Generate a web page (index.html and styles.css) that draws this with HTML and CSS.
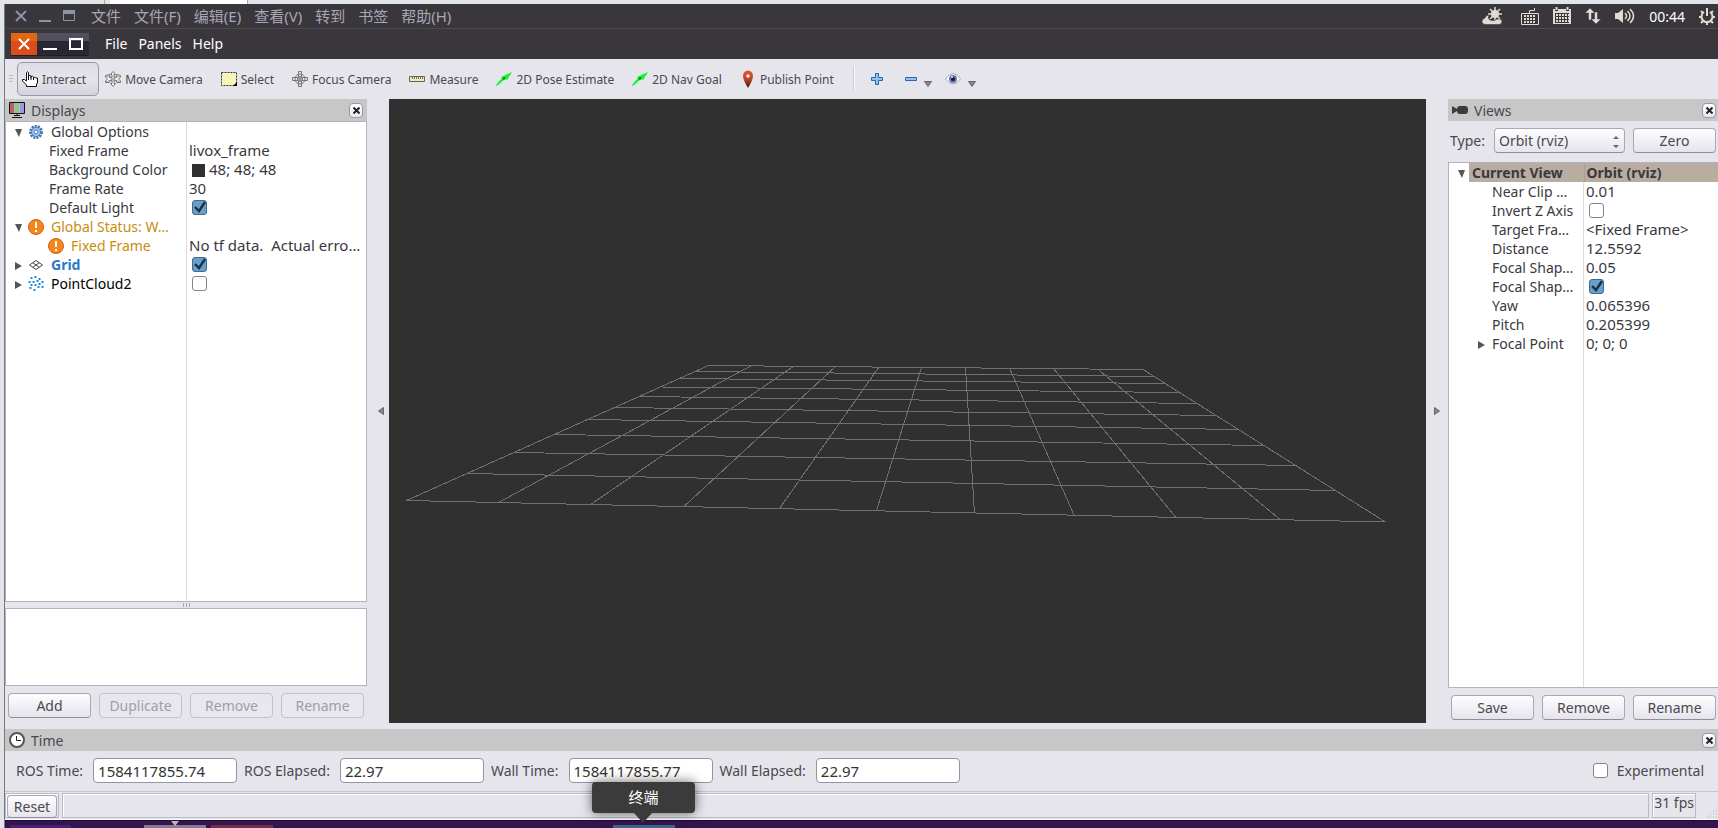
FILE: index.html
```html
<!DOCTYPE html>
<html lang="zh-CN">
<head>
<meta charset="utf-8">
<title>RViz</title>
<link rel="stylesheet" href="styles.css">
</head>
<body>
<div class="host-tabs"><span class="host-tab-edge"></span><span class="host-tab"></span></div>
<div class="desktop">
  <header class="top-panel">
    <div class="panel-window-buttons">
      <button type="button" aria-label="Close window"><svg width="12" height="12" viewBox="0 0 12 12"><path d="M1 1L11 11M11 1L1 11" fill="none" stroke="#8b93a7" stroke-width="2"/></svg></button>
      <button type="button" aria-label="Minimize window"><svg width="12" height="12" viewBox="0 0 12 12"><path d="M0 11H12" stroke="#8b93a7" stroke-width="2"/></svg></button>
      <button type="button" aria-label="Maximize window"><svg width="12" height="12" viewBox="0 0 12 12"><path d="M.5 1V10.500H11.500V1" fill="none" stroke="#8b93a7"/><path d="M0 0H12V4H0z" fill="#8b93a7"/></svg></button>
    </div>
    <nav class="panel-menu">
      <a href="#">文件</a><a href="#">文件(F)</a><a href="#">编辑(E)</a><a href="#">查看(V)</a><a href="#">转到</a><a href="#">书签</a><a href="#">帮助(H)</a>
    </nav>
    <div class="indicators">
      <svg class="weather" width="21" height="18" viewBox="0 0 21 18" fill="#dfdbd2"><circle cx="13" cy="7" r="4"/><path d="M13 0V14M6 7H20M8 2L18 12M18 2L8 12" stroke="#dfdbd2" stroke-width="1.500"/><path d="M3 17.500Q0 17 0 14.500T3 11Q4 8 7 8Q5 13 10 13.500Q13 14 15 12Q19 11 20 14Q20 17.500 17 17.500z" stroke="#39373c" stroke-width=".6"/></svg>
      <svg width="18" height="18" viewBox="0 0 18 18" fill="none" stroke="#dfdbd2"><path d="M.5 6.500H17.500V17.500H.5zM8.500 6V3.500H13.500V1"/><path d="M3 9H15M3 12H15M3 15H15" stroke-width="2" stroke-dasharray="2 1"/></svg>
      <svg width="18" height="18" viewBox="0 0 18 18"><path d="M0 2H2V4H5V2H13V4H16V2H18V17H0z" fill="#dfdbd2"/><path d="M3.500 0V3M14.500 0V3" stroke="#dfdbd2" stroke-width="2"/><path d="M2 6.500H16M2 9.500H16M2 12.500H16M2 15.500H16M2.500 6V16M5.500 6V16M8.500 6V16M11.500 6V16M14.500 6V16" stroke="#39373c"/></svg>
      <svg width="16" height="16" viewBox="0 0 16 16" fill="#dfdbd2"><path d="M5 0L10 5H6.500V12H3.500V5H0zM11 16L6 11H9.500V4H12.500V11H16z" stroke="#39373c" stroke-width=".5"/></svg>
      <svg width="20" height="16" viewBox="0 0 20 16"><path d="M0 5H3L8 1V15L3 11H0z" fill="#dfdbd2"/><path d="M10 5q3 3 0 6M12.500 3q5 5 0 10M15 1q7 7 0 14" fill="none" stroke="#dfdbd2" stroke-width="1.500"/></svg>
      <time>00:44</time>
      <svg width="16" height="17" viewBox="0 0 16 17" fill="none" stroke="#dfdbd2" stroke-width="2"><path d="M5 4A5.500 5.500 0 1 0 11 4M8 0V8"/><path d="M0 9H3M13 9H16M2 3L4 5M14 3L12 5M2 15L4 13M14 15L12 13M8 14V17"/></svg>
    </div>
  </header>

  <div class="menu-bar">
    <div class="window-buttons">
      <button type="button" class="window-close" aria-label="Close"><svg width="14" height="12" viewBox="0 0 14 12"><path d="M2 1L12 11M12 1L2 11" fill="none" stroke="#fff" stroke-width="2"/></svg></button>
      <button type="button" aria-label="Minimize"><svg width="14" height="12" viewBox="0 0 14 12"><path d="M0 11H14" stroke="#fff" stroke-width="2"/></svg></button>
      <button type="button" aria-label="Maximize"><svg width="14" height="12" viewBox="0 0 14 12"><path d="M1 1H13V11H1z" fill="none" stroke="#fff" stroke-width="2"/></svg></button>
    </div>
    <nav class="app-menu"><a href="#">File</a><a href="#">Panels</a><a href="#">Help</a></nav>
  </div>

  <div class="toolbar">
    <span class="toolbar-grip"></span>
    <button type="button" class="tool tool-active"><svg width="16" height="16" viewBox="0 0 16 16"><path d="M4.500 10V1.500Q5.500 0 6.500 1.500V6.500V5Q8 4 9 5V7V5.500Q10.500 4.500 11.500 6V7.500V6.500Q13 5.500 13.500 7H15.500V12L14.500 13V15.500H4.500V14L.5 10V8.500H2.500z" fill="#fff" stroke="#111"/><path d="M6.500 6V9M9 7V9M11.500 7V9" stroke="#111"/></svg><span>Interact</span></button>
    <button type="button" class="tool"><svg width="16" height="16" viewBox="0 0 16 16" fill="#f8f8f8" stroke="#555"><path d="M8 .5L10.500 3.500H9V6.500L12 5.500L11.500 3.500L15.500 4.500V6L13.500 8L15.500 10V11.500H12L11.500 10L9 9V12.500H10.500L8 15.500L5.500 12.500H7V9L4.500 10L4 11.500H.5V10L2.500 8L.5 6V4.500L4.500 3.500L4 5.500L7 6.500V3.500H5.500z" stroke-width=".8"/><path d="M1 5L15 11M15 5L1 11" stroke-width=".5"/></svg><span>Move Camera</span></button>
    <button type="button" class="tool"><svg width="16" height="14" viewBox="0 0 16 14"><path d="M.5 .5H15.500V13.500H.5z" fill="#faf3ba" stroke="#333" stroke-dasharray="2 1"/><path d="M16 10V14H12z"/></svg><span>Select</span></button>
    <button type="button" class="tool"><svg width="16" height="16" viewBox="0 0 16 16" fill="none" stroke="#777"><circle cx="8" cy="8" r="5"/><circle cx="8" cy="8" r="2.500"/><path d="M6.500 .5H9.500V6.500H15.500V9.500H9.500V15.500H6.500V9.500H.5V6.500H6.500zM8 5V11M5 8H11"/></svg><span>Focus Camera</span></button>
    <button type="button" class="tool"><svg width="16" height="16" viewBox="0 0 16 16"><path d="M.5 5.500H15.500V10.500H.5z" fill="#eeeab8" stroke="#66645a"/><path d="M3.500 6V8M5.500 6V8M7.500 6V8M9.500 6V8M11.500 6V8M13.500 6V8" stroke="#77745f"/></svg><span>Measure</span></button>
    <button type="button" class="tool"><svg width="16" height="16" viewBox="0 0 16 16"><path d="M16 1L11 9L9 8L1 15L0 14L6 7L5 6z" fill="#0df52b"/><path d="M7 8l2-1" stroke="#087d19" stroke-width="2"/></svg><span>2D Pose Estimate</span></button>
    <button type="button" class="tool"><svg width="16" height="16" viewBox="0 0 16 16"><path d="M16 1L11 9L9 8L1 15L0 14L6 7L5 6z" fill="#0df52b"/><path d="M7 8l2-1" stroke="#087d19" stroke-width="2"/></svg><span>2D Nav Goal</span></button>
    <button type="button" class="tool"><svg width="16" height="18" viewBox="0 0 16 18"><defs><linearGradient id="pin" x2="0" y2="1"><stop stop-color="#e9512c"/><stop offset=".5" stop-color="#b9472a"/><stop offset="1" stop-color="#3a1606"/></linearGradient></defs><path d="M8 18Q3 10 3 6A5 5.500 0 0 1 13 6Q13 10 8 18z" fill="url(#pin)"/><circle cx="8" cy="6" r="1.800" fill="#e7e5ec"/></svg><span>Publish Point</span></button>
    <span class="toolbar-separator"></span>
    <button type="button" class="tool-small" aria-label="Add tool"><svg width="12" height="12" viewBox="0 0 12 12"><path d="M4.500 .5H7.500V4.500H11.500V7.500H7.500V11.500H4.500V7.500H.5V4.500H4.500z" fill="#91c2ee" stroke="#2967aa"/></svg></button>
    <button type="button" class="tool-small" aria-label="Remove tool"><svg width="12" height="12" viewBox="0 0 12 12"><path d="M.5 4.500H11.500V7.500H.5z" fill="#91c2ee" stroke="#2967aa"/></svg><svg class="caret" width="8" height="6" viewBox="0 0 8 6"><path d="M.5 .5H7.500L4 5.500z" fill="#8a8890" stroke="#65636c"/></svg></button>
    <button type="button" class="tool-small" aria-label="Tool visibility"><svg width="16" height="12" viewBox="0 0 16 12"><path d="M.5 6Q8-5 15.500 6Q8 16 .5 6z" fill="#fff" stroke="#a5a3aa"/><circle cx="8" cy="6" r="4" fill="#6577b5"/><circle cx="8" cy="6" r="2" fill="#111640"/><circle cx="7" cy="4" r="1" fill="#dfe7ff"/></svg><svg class="caret" width="8" height="6" viewBox="0 0 8 6"><path d="M.5 .5H7.500L4 5.500z" fill="#8a8890" stroke="#65636c"/></svg></button>
  </div>

  <main class="workspace">
    <section class="dock displays">
      <h2 class="dock-title"><svg width="16" height="16" viewBox="0 0 16 16"><path d="M.5 .5H15.500V11.500H.5z" fill="#fff" stroke="#111"/><path d="M1 1H5.500V11H1z" fill="#b96368"/><path d="M5.500 1H10.500V11H5.500z" fill="#8cc68c"/><path d="M10.500 1H15V11H10.500z" fill="#9a9ae0"/><path d="M8 12V14M5 13.500H11M3 15.500H13" stroke="#111"/></svg><span>Displays</span><button type="button" class="dock-close" aria-label="Close Displays"><svg width="7" height="7" viewBox="0 0 7 7"><path d="M.5 .5L6.500 6.500M6.500 .5L.5 6.500" stroke="#222" stroke-width="2"/></svg></button></h2>
      <div class="tree">
        <table>
          <colgroup><col class="col-name"><col></colgroup>
          <tr><td class="level-0"><i class="twisty open"></i><svg width="14" height="14" viewBox="0 0 14 14"><circle cx="7" cy="7" r="5.500" fill="none" stroke="#3e73b5" stroke-width="3" stroke-dasharray="2 1"/><circle cx="7" cy="7" r="4.500" fill="#a9c8ec" stroke="#4c80c0"/><circle cx="7" cy="7" r="2" fill="#fff" stroke="#3e73b5"/></svg>Global Options</td><td></td></tr>
          <tr><td class="level-1">Fixed Frame</td><td>livox_frame</td></tr>
          <tr><td class="level-1">Background Color</td><td><i class="swatch"></i>48; 48; 48</td></tr>
          <tr><td class="level-1">Frame Rate</td><td>30</td></tr>
          <tr><td class="level-1">Default Light</td><td><input type="checkbox" checked aria-label="Default Light"></td></tr>
          <tr class="warning"><td class="level-0"><i class="twisty open"></i><svg width="16" height="16" viewBox="0 0 16 16"><circle cx="8" cy="8" r="7.500" fill="#f5861c" stroke="#cf6010"/><path d="M8 3V9M8 11V13" stroke="#fff" stroke-width="2"/></svg>Global Status: W…</td><td></td></tr>
          <tr class="warning"><td class="level-1"><svg width="16" height="16" viewBox="0 0 16 16"><circle cx="8" cy="8" r="7.500" fill="#f5861c" stroke="#cf6010"/><path d="M8 3V9M8 11V13" stroke="#fff" stroke-width="2"/></svg>Fixed Frame</td><td>No tf data.&nbsp; Actual erro…</td></tr>
          <tr class="grid-display"><td class="level-0"><i class="twisty"></i><svg width="14" height="10" viewBox="0 0 14 10"><path d="M7 .5L13.500 5L7 9.500L.5 5zM3.700 2.700L10.300 7.300M10.300 2.700L3.700 7.300" fill="none" stroke="#444"/></svg>Grid</td><td><input type="checkbox" checked aria-label="Grid"></td></tr>
          <tr class="cloud-display"><td class="level-0"><i class="twisty"></i><svg width="15" height="15" viewBox="0 0 15 15"><path d="M2 1h2v2h-2zM6 0h2v2h-2zM10 2h2v2h-2zM0 5h2v2h-2zM4 5h2v2h-2zM8 4h2v2h-2zM13 5h2v2h-2zM2 8h2v2h-2zM6 8h2v2h-2zM10 7h2v2h-2zM13 10h2v2h-2zM9 10h2v2h-2zM1 11h2v2h-2zM5 13h2v2h-2z" fill="#1c8ae8"/></svg>PointCloud2</td><td><input type="checkbox" aria-label="PointCloud2"></td></tr>
        </table>
      </div>
      <div class="splitter"><i></i><i></i><i></i></div>
      <div class="description"></div>
      <div class="dock-actions">
        <button type="button" class="button">Add</button><button type="button" class="button" disabled>Duplicate</button><button type="button" class="button" disabled>Remove</button><button type="button" class="button" disabled>Rename</button>
      </div>
    </section>

    <button type="button" class="collapse collapse-left" aria-label="Collapse left panel"><svg width="6" height="8" viewBox="0 0 6 8"><path d="M5.500 .5V7.500L.5 4z" fill="#8a8890" stroke="#65636c"/></svg></button>
    <div class="viewport">
      <svg viewBox="389 99 1037 624" fill="none" stroke="#707070" shape-rendering="crispEdges" aria-label="3D grid">
        <path d="M708 365.500L1143 369.500M695 371.500L1154 376.500M679 378.500L1165 383.500M662 387L1180 392.500M640 396.500L1196 403.500M615 407.500L1216 415.500M588 419.500L1238 429.500M554 434.500L1263 445.500M514 452.500L1296 465.500M467 473.500L1335 490.500M407 500.500L1385 522"/>
        <path d="M708.500 365.500L406.500 500.500M751.500 365.500L498.500 502.500M794 366L590.500 504.500M836 366L684.500 506M879 367L779.500 508.500M921.500 367.500L876.500 510.500M965.500 367.500L974.500 513.500M1009.500 368L1074 515M1053.500 368.500L1175.500 517M1097.500 369L1279.500 519M1143 369.500L1385.500 522"/>
      </svg>
    </div>
    <button type="button" class="collapse" aria-label="Collapse right panel"><svg width="6" height="8" viewBox="0 0 6 8"><path d="M.5 .5V7.500L5.500 4z" fill="#8a8890" stroke="#65636c"/></svg></button>

    <section class="dock views">
      <h2 class="dock-title"><svg width="16" height="10" viewBox="0 0 16 10"><path d="M0 1L5 4V6L0 9z" fill="#3c3c3c"/><rect x="5" y="1" width="11" height="8" rx="3" fill="#3c3c3c"/></svg><span>Views</span><button type="button" class="dock-close" aria-label="Close Views"><svg width="7" height="7" viewBox="0 0 7 7"><path d="M.5 .5L6.500 6.500M6.500 .5L.5 6.500" stroke="#222" stroke-width="2"/></svg></button></h2>
      <div class="view-type">
        <label for="view-type">Type:</label>
        <div class="select-box"><select id="view-type"><option>Orbit (rviz)</option></select><svg width="8" height="14" viewBox="0 0 8 14"><path d="M1 4L4 1L7 4zM1 10L4 13L7 10z" fill="#65636c"/></svg></div>
        <button type="button" class="button">Zero</button>
      </div>
      <div class="tree">
        <table>
          <colgroup><col class="col-name"><col></colgroup>
          <tr class="current"><td class="level-0"><i class="twisty open"></i><b>Current View</b></td><td><b>Orbit (rviz)</b></td></tr>
          <tr><td class="level-1">Near Clip …</td><td>0.01</td></tr>
          <tr><td class="level-1">Invert Z Axis</td><td><input type="checkbox" aria-label="Invert Z Axis"></td></tr>
          <tr><td class="level-1">Target Fra…</td><td>&lt;Fixed Frame&gt;</td></tr>
          <tr><td class="level-1">Distance</td><td>12.5592</td></tr>
          <tr><td class="level-1">Focal Shap…</td><td>0.05</td></tr>
          <tr><td class="level-1">Focal Shap…</td><td><input type="checkbox" checked aria-label="Focal Shape Fixed Size"></td></tr>
          <tr><td class="level-1">Yaw</td><td>0.065396</td></tr>
          <tr><td class="level-1">Pitch</td><td>0.205399</td></tr>
          <tr><td class="level-1 expandable"><i class="twisty"></i>Focal Point</td><td>0; 0; 0</td></tr>
        </table>
      </div>
      <div class="dock-actions">
        <button type="button" class="button">Save</button><button type="button" class="button">Remove</button><button type="button" class="button">Rename</button>
      </div>
    </section>
  </main>

  <section class="time-dock">
    <h2 class="dock-title"><svg width="16" height="16" viewBox="0 0 16 16"><circle cx="8" cy="8" r="7" fill="#fff" stroke="#555" stroke-width="2"/><path d="M7.500 4V8.500H12" fill="none" stroke="#222"/></svg><span>Time</span><button type="button" class="dock-close" aria-label="Close Time"><svg width="7" height="7" viewBox="0 0 7 7"><path d="M.5 .5L6.500 6.500M6.500 .5L.5 6.500" stroke="#222" stroke-width="2"/></svg></button></h2>
    <div class="time-row">
      <label for="ros-time">ROS Time:</label><input type="text" id="ros-time" value="1584117855.74" readonly>
      <label for="ros-elapsed">ROS Elapsed:</label><input type="text" id="ros-elapsed" value="22.97" readonly>
      <label for="wall-time">Wall Time:</label><input type="text" id="wall-time" value="1584117855.77" readonly>
      <label for="wall-elapsed">Wall Elapsed:</label><input type="text" id="wall-elapsed" value="22.97" readonly>
      <label class="experimental"><input type="checkbox">Experimental</label>
    </div>
  </section>

  <footer class="status-bar">
    <div class="status-cell"><button type="button" class="button reset">Reset</button></div>
    <div class="status-cell status-message"></div>
    <div class="status-cell">31 fps</div>
    <svg class="size-grip" width="12" height="12" viewBox="0 0 12 12"><path d="M1 11H12M4 8H12M7 5H12M10 2H12" stroke="#b5b2bd" stroke-width="1" stroke-dasharray="1 2"/></svg>
  </footer>

  <div class="launcher">
    <span class="app app-purple"></span>
    <span class="app app-grey"><i class="running"></i></span>
    <span class="app app-red"></span>
    <span class="app app-teal"><span class="tooltip" role="tooltip">终端</span></span>
  </div>
</div>
</body>
</html>
```
FILE: styles.css
```css
* { box-sizing: border-box; }

body {
  margin: 0;
  height: 100vh;
  display: flex;
  flex-direction: column;
  overflow: hidden;
  background: #e2e5e8;
  color: #4a4850;
  font: 14px/19px "Noto Sans", "Noto Sans CJK SC", sans-serif;
}

button, input, select {
  font: inherit;
  color: inherit;
}

button {
  padding: 0;
  border: 0;
  background: none;
}

a { color: inherit; text-decoration: none; }
svg { display: block; flex: none; }

.host-tabs { display: flex; height: 4px; gap: 5px; }
.host-tab-edge { width: 105px; border-right: 1px solid #a8a8a8; }
.host-tab { width: 138px; background: #fff; border-right: 1px solid #a8a8a8; }

.desktop {
  flex: 1;
  min-height: 0;
  display: flex;
  flex-direction: column;
  margin-left: 4px;
  border-left: 1px solid #77777c;
  background: #e7e5ec;
}

/* Desktop panel and application menu */
.top-panel {
  height: 25px;
  display: flex;
  align-items: center;
  padding: 0 3px 0 10px;
  background: #39373c;
  border-bottom: 1px solid #4d4b50;
  color: #a9a6b5;
  white-space: nowrap;
}

.panel-window-buttons { display: flex; gap: 12px; margin-right: 16px; }
.panel-menu { display: flex; gap: 13px; font-size: 15px; }
.indicators { margin-left: auto; display: flex; align-items: center; gap: 14px; color: #fff; }
.weather { margin-right: 4px; }

.menu-bar {
  height: 30px;
  display: flex;
  align-items: center;
  padding-left: 6px;
  background: #39373c;
  color: #fff;
}

.window-buttons {
  display: flex;
  background: linear-gradient(#53505d 8px, #292733 8px);
  border-bottom: 1px solid #201f24;
}
.window-buttons button { width: 26px; height: 22px; display: grid; place-items: center; }
.window-buttons .window-close { background: linear-gradient(#e0660f 8px, #dc4c1c 8px); }
.app-menu { display: flex; gap: 11px; margin-left: 16px; padding-bottom: 2px; }

/* Toolbar */
.toolbar {
  height: 40px;
  display: flex;
  align-items: center;
  padding-left: 4px;
  font-size: 12px;
  white-space: nowrap;
}
.toolbar-grip {
  width: 4px;
  height: 8px;
  margin-right: 4px;
  background: repeating-linear-gradient(#bcb9c3 0 1px, transparent 1px 3px);
}
.tool {
  height: 34px;
  display: flex;
  align-items: center;
  gap: 4px;
  padding: 0 9px;
}
.tool-active {
  margin-right: -3px;
  padding: 0 12px 0 4px;
  border: 1px solid #9a98aa;
  border-radius: 5px;
  background: linear-gradient(#dddbe3, #e6e4eb 50%, #d4d2dd);
}
.toolbar-separator { width: 2px; height: 24px; margin: 0 16px 0 10px; background: #cbc9d2; border-right: 1px solid #f8f7fa; }
.tool-small { display: flex; align-items: center; gap: 7px; margin-right: 22px; }
.tool-small + .tool-small + .tool-small { margin-left: -9px; }
.caret { align-self: flex-end; margin-bottom: -2px; }

/* Central workspace */
.workspace { flex: 1; min-height: 0; display: flex; }
.dock { display: flex; flex-direction: column; flex: none; }
.displays { width: 362px; padding-bottom: 5px; }
.views { width: 270px; padding-bottom: 3px; }

.dock-title {
  height: 22px;
  margin: 0;
  padding: 0 4px;
  display: flex;
  align-items: center;
  gap: 6px;
  flex: none;
  background: #c7c7c7;
  font-size: 14px;
  font-weight: 400;
}
.views .dock-title, .time-dock .dock-title { padding-right: 2px; }
.dock-close {
  width: 14px;
  height: 15px;
  margin-left: auto;
  display: grid;
  place-items: center;
  border: 1px solid #9a98a8;
  border-radius: 4px;
  background: linear-gradient(#fff, #ebe9f0);
}

.tree {
  --name-width: 180px;
  flex: 1;
  min-height: 0;
  border: 1px solid #b4b1c2;
  background: linear-gradient(#dcdbe0, #dcdbe0) var(--name-width) 0 / 1px 100% no-repeat #fff;
  color: #3a393d;
}
.views .tree { --name-width: 134px; border-right: 0; }
.tree table { width: 100%; border-collapse: collapse; table-layout: fixed; }
.col-name { width: calc(var(--name-width) + 1px); }
.tree td { height: 19px; padding: 0 0 0 2px; white-space: nowrap; overflow: hidden; vertical-align: top; }
.tree td:last-child { font-size: 15px; }
.tree .current td:last-child { font-size: 14px; }
.tree td > svg { display: inline-block; vertical-align: middle; margin: -3px 7px 0 0; }
.tree .level-0 { padding-left: 9px; }
.tree .level-0 > svg { width: 16px; }
.tree .level-1 { padding-left: 43px; }
.tree .warning .level-1 { padding-left: 42px; }
.views .tree .expandable { padding-left: 29px; }

.twisty {
  display: inline-block;
  width: 13px;
  height: 8px;
  background: linear-gradient(#555, #555) no-repeat 0 0 / 7px 8px;
  clip-path: polygon(0 0, 7px 4px, 0 8px);
}
.twisty.open { clip-path: polygon(0 0, 7px 0, 4px 8px); }
.views .twisty { width: 14px; }

.current { color: #3a393d; }
.current td { background: #b9aca1; }
.current .level-0 { background: linear-gradient(#fff, #fff) no-repeat 0 0 / 20px 100% #b9aca1; border-right: 1px solid #aa9f97; }

.warning .level-0, .warning .level-1 { color: #c98c10; }
.grid-display { color: #2a78c8; font-weight: 700; }
.cloud-display { color: #000; }
.swatch { display: inline-block; width: 13px; height: 13px; margin: 0 4px 0 3px; background: #303030; vertical-align: -2px; }

input[type="checkbox"] {
  appearance: none;
  width: 15px;
  height: 15px;
  margin: 2px 0 0 3px;
  border: 1px solid #85838f;
  border-radius: 3px;
  background: #fff;
  vertical-align: top;
}
input[type="checkbox"]:checked {
  border-color: #416b8d;
  background: url("data:image/svg+xml,%3Csvg xmlns='http://www.w3.org/2000/svg' viewBox='0 0 13 13'%3E%3Cpath d='M2 6L6 10L12 1' fill='none' stroke='%23222f3c' stroke-width='2.400'/%3E%3C/svg%3E") center / 13px 13px no-repeat #67a0cc;
}

.splitter { height: 6px; display: flex; justify-content: center; align-items: center; gap: 2px; }
.splitter i { width: 1px; height: 4px; background: #aaa8b3; }
.description { height: 78px; border: 1px solid #b4b1c2; background: #fff; }

.dock-actions { display: flex; gap: 8px; padding: 7px 3px 0; }
.views .dock-actions { padding-right: 2px; }
.button {
  flex: 1;
  height: 25px;
  border: 1px solid #aaa7b5;
  border-bottom-color: #8f8d9b;
  border-radius: 4px;
  background: linear-gradient(#fdfdfe, #e6e4eb);
  text-align: center;
}
.button:disabled { color: #a09ea6; border-color: #c2c0ca; background: #e9e7ed; }

.collapse { width: 22px; flex: none; display: grid; place-items: center; }
.collapse-left { padding-left: 6px; }
.viewport { flex: 1; min-width: 0; background: #303030; }
.viewport svg { width: 100%; height: 100%; }

.view-type { display: flex; align-items: center; gap: 8px; padding: 7px 2px 9px; }
.view-type label { width: 36px; }
.view-type .button { flex: 0 0 83px; }
.select-box { position: relative; flex: 1; }
.select-box select {
  display: block;
  appearance: none;
  width: 100%;
  height: 25px;
  padding: 0 4px;
  border: 1px solid #aaa7b5;
  border-bottom-color: #8f8d9b;
  border-radius: 4px;
  background: linear-gradient(#fdfdfe, #e6e4eb);
}
.select-box svg { position: absolute; right: 5px; top: 7px; pointer-events: none; }

/* Time dock */
.time-dock { margin-top: 6px; }
.time-row { display: flex; align-items: center; gap: 7px; padding: 7px 14px 8px 11px; border-bottom: 1px solid #c6c4cd; }
.time-row label { margin-right: 3px; }
.time-row input[type="text"] {
  width: 144px;
  height: 25px;
  padding: 0 4px;
  border: 1px solid #9693a6;
  border-radius: 4px;
  background: #fff;
  color: #333;
  font-size: 15px;
}
.time-row .experimental { margin: 0 0 0 auto; display: flex; align-items: center; gap: 9px; }
.experimental input { margin: 0; }

.status-bar { display: flex; gap: 3px; padding: 1px 0; height: 28px; border-bottom: 1px solid #fff; }
.status-cell { border: 1px solid #bbb9c2; box-shadow: inset 1px 1px #fff; padding: 1px; line-height: 16px; }
.status-message { flex: 1; }
.status-bar .reset { height: 23px; width: 50px; display: block; }
.size-grip { align-self: flex-end; margin-left: 7px; }

/* Launcher strip */
.launcher {
  height: 8px;
  display: grid;
  grid-template-columns: 5px 61px 73px 62px 5px 62px 340px 62px;
  align-items: end;
  background: #331450;
  border-top: 1px solid #1f0c31;
}
.app { height: 3px; }
.app-purple { grid-column: 2; background: #4c1e70; }
.app-grey { grid-column: 4; background: #89798f; position: relative; }
.app-red { grid-column: 6; background: #722d4b; }
.app-teal { grid-column: 8; background: #3e6389; position: relative; }
.running {
  position: absolute;
  left: 27px;
  bottom: 2px;
  width: 8px;
  height: 5px;
  background: #b9b5bd;
  clip-path: polygon(0 0, 100% 0, 50% 100%);
}
.tooltip {
  position: absolute;
  left: -21px;
  bottom: 15px;
  width: 103px;
  padding: 6px 0;
  border-radius: 4px;
  background: #3c3b3c;
  box-shadow: 0 0 12px rgba(0, 0, 0, .6);
  color: #fff;
  font-size: 15px;
  text-align: center;
}
.tooltip::after {
  content: "";
  position: absolute;
  left: 42px;
  top: 100%;
  border: 9px solid transparent;
  border-top: 10px solid #3c3b3c;
  border-bottom: 0;
}
```
